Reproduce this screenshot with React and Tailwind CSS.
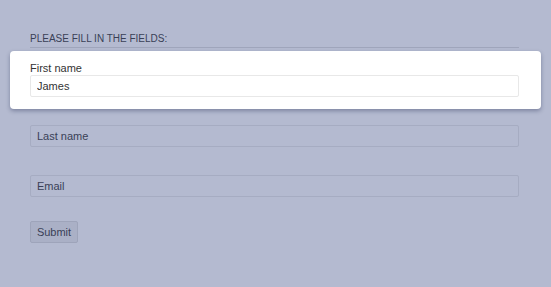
import React from 'react';

const inputCls =
  'block w-full h-[22px] border border-[#e8e8e8] rounded-[2px] bg-white px-[6px] text-[11px] text-[#333] outline-none placeholder:text-[#333]';

export default function App() {
  return (
    <div
      className="relative min-h-screen bg-white pl-[30px] pr-[32px] pt-[33px]"
      style={{ fontFamily: '"Liberation Sans", Arial, sans-serif' }}
    >
      {/* Form */}
      <form onSubmit={(e) => e.preventDefault()}>
        <div className="border-b border-[#dcdcdc] pb-[2px] text-[10px] leading-[12px] text-[#333] uppercase">
          Please fill in the fields:
        </div>

        {/* Highlighted field */}
        <div className="relative z-10 -ml-5 -mr-[22px] mt-[3px] rounded-[4px] bg-white pl-5 pr-[22px] pt-[11px] pb-[12px] shadow-[0_2px_4px_rgba(20,30,70,0.35)]">
          <label className="block text-[11px] leading-[13px] text-[#333]">First name</label>
          <input className={inputCls} defaultValue="James" />
        </div>

        <input className={`${inputCls} mt-4`} placeholder="Last name" />
        <input className={`${inputCls} mt-[28px]`} placeholder="Email" />

        <button
          type="submit"
          className="mt-6 h-[22px] w-[48px] rounded-[2px] border border-[#dadada] bg-[#efefef] text-[11px] text-[#333]"
        >
          Submit
        </button>
      </form>

      {/* Dim overlay */}
      <div className="absolute inset-0 bg-[#44528a]/40" />
    </div>
  );
}
